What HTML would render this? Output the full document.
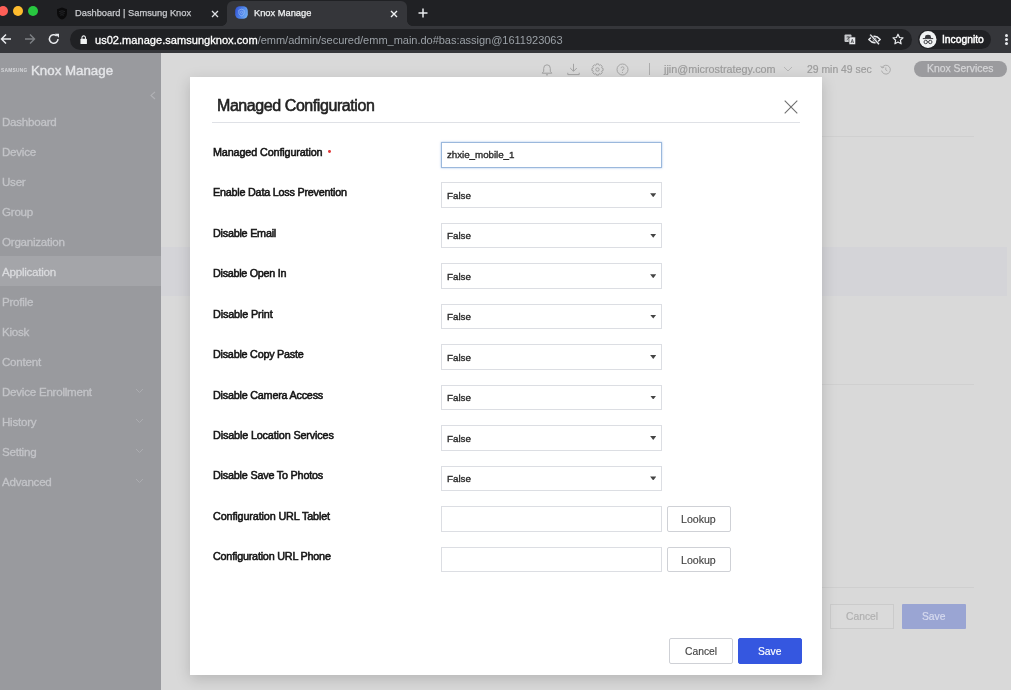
<!DOCTYPE html>
<html>
<head>
<meta charset="utf-8">
<title>Knox Manage</title>
<style>
*{box-sizing:border-box;margin:0;padding:0}
html,body{width:1011px;height:690px;overflow:hidden;background:#d9d9d9;font-family:"Liberation Sans",sans-serif;}
.abs{position:absolute}
.t{display:inline-block;will-change:transform}
.inp .t{position:relative;top:-0.700px}
.lbl,.nav,.hdr,.tabtxt,#url,#mtitle,.gl{will-change:transform}
#wrap{position:relative;width:1011px;height:690px;overflow:hidden;filter:blur(0.5px);}
/* browser chrome */
#titlebar{left:0;top:0;width:1011px;height:26px;background:#202124}
#toolbar{left:0;top:25.500px;width:1011px;height:27.500px;background:#35363a}
#tab{left:227px;top:1px;width:180px;height:25px;background:#35363a;border-radius:6px 6px 0 0}
#tab:before,#tab:after{content:"";position:absolute;bottom:0;width:5px;height:5px;background:radial-gradient(circle at 0 0,rgba(0,0,0,0) 4.500px,#35363a 5px)}
#tab:before{left:-5px}
#tab:after{right:-5px;background:radial-gradient(circle at 100% 0,rgba(0,0,0,0) 4.500px,#35363a 5px)}
.tl{width:9px;height:9px;border-radius:50%;top:6px}
.tabtxt{color:#e8eaed;font-size:9.300px;top:7.500px;white-space:nowrap;-webkit-text-stroke:0.250px currentColor}
#pill{left:70px;top:29px;width:842px;height:21px;border-radius:11px;background:#202124}
#url{left:95.300px;top:33.600px;font-size:11.050px;color:#9aa0a6;white-space:nowrap;letter-spacing:0.02px}
#url b{color:#fff;font-weight:normal;-webkit-text-stroke:0.3px #fff}
/* page */
#sidebar{left:0;top:53px;width:161px;height:637px;background:#999a9e}
#main{left:161px;top:53px;width:850px;height:637px;background:#d9d9d9}
.nav{left:2.400px;color:#c8c9cd;font-size:11.600px;white-space:nowrap;letter-spacing:-0.250px;-webkit-text-stroke:0.300px currentColor}
#navsel{left:0;top:256px;width:161px;height:30px;background:#a4a5a9}
.hdr{color:#9c9c9c;font-size:10.800px;white-space:nowrap;top:62.500px;-webkit-text-stroke:0.200px currentColor}
/* modal */
#modal{left:190px;top:77px;width:631.700px;height:597.700px;background:#fff;box-shadow:0 4px 14px rgba(0,0,0,0.17)}
#mtitle{left:217px;top:97px;font-size:16px;color:#222;white-space:nowrap;-webkit-text-stroke:0.550px #222;letter-spacing:-0.426px}
#mline{left:212px;top:122px;width:588px;height:1px;background:#dfe1e6}
.lbl{left:212.500px;font-size:10.8px;color:#141414;white-space:nowrap;-webkit-text-stroke:0.550px #141414}
.inp{left:440.600px;width:221.400px;height:25.500px;border:1px solid #dcdee3;background:#fff;font-size:9.800px;color:#2a2a2a;-webkit-text-stroke:0.350px currentColor;padding:0 0 0 5.400px;line-height:25px;white-space:nowrap}
.inp.focus{border:1px solid #9bb8dc;box-shadow:0 0 2px rgba(100,150,220,0.6)}
.arr{position:absolute;right:4.700px;top:9.900px;width:6.200px;height:3.900px;background:#444;clip-path:polygon(0 0,100% 0,50% 100%)}
.btn{height:25.500px;border:1px solid #cfd1d6;background:#fff;font-size:10.300px;color:#454545;text-align:center;line-height:25.400px;border-radius:2px;-webkit-text-stroke:0.150px currentColor}
</style>
</head>
<body>
<div id="wrap">
<!-- page background -->
<div id="main" class="abs"></div>
<div id="sidebar" class="abs"></div>

<!-- main bg details -->
<div class="abs" style="left:161px;top:247px;width:845.500px;height:49px;background:#d4d4d8"></div>
<div class="abs" style="left:822px;top:136px;width:152px;height:1px;background:#d0d0d0"></div>
<div class="abs" style="left:822px;top:384px;width:152px;height:1px;background:#d0d0d0"></div>
<div class="abs" style="left:822px;top:587px;width:152px;height:1px;background:#cfcfcf"></div>
<div class="abs" style="left:830px;top:603.500px;width:64px;height:25.500px;border:1px solid #cbcbcb;background:#dadada;color:#b0b0b0;font-size:10.300px;-webkit-text-stroke:0.200px #b0b0b0;text-align:center;line-height:24px"><span class="t">Cancel</span></div>
<div class="abs" style="left:902px;top:603.500px;width:64.200px;height:25.500px;background:#9aa5d3;color:#d6daee;font-size:10.300px;-webkit-text-stroke:0.200px #d6daee;text-align:center;line-height:26px;border-radius:1px"><span class="t">Save</span></div>

<!-- sidebar content -->
<div id="navsel" class="abs"></div>
<div class="abs gl" style="left:0.5px;top:67.600px;font-size:4.800px;color:#d6d7da;letter-spacing:0.280px;font-weight:bold;white-space:nowrap">SAMSUNG</div>
<div class="abs gl" style="left:30.500px;top:63.200px;font-size:13.300px;color:#e4e5e8;white-space:nowrap;-webkit-text-stroke:0.400px #e4e5e8">Knox Manage</div>
<svg class="abs" style="left:149px;top:90px" width="8" height="11" viewBox="0 0 8 11"><path d="M6 1.800 L2 5.400 L6 9" stroke="#b1b2b6" stroke-width="1.100" fill="none"/></svg>
<div class="abs nav" style="top:115px;color:#c3c4c8">Dashboard</div>
<div class="abs nav" style="top:145px;color:#c3c4c8">Device</div>
<div class="abs nav" style="top:175px;color:#c3c4c8">User</div>
<div class="abs nav" style="top:205px;color:#c3c4c8">Group</div>
<div class="abs nav" style="top:235px;color:#c3c4c8">Organization</div>
<div class="abs nav" style="top:265px;color:#dadbde">Application</div>
<div class="abs nav" style="top:295px;color:#c3c4c8">Profile</div>
<div class="abs nav" style="top:325px;color:#c3c4c8">Kiosk</div>
<div class="abs nav" style="top:355px;color:#c3c4c8">Content</div>
<div class="abs nav" style="top:385px;color:#c3c4c8">Device Enrollment</div>
<svg class="abs" style="left:135px;top:388px" width="9" height="6" viewBox="0 0 9 6"><path d="M1 1 L4.500 4.500 L8 1" stroke="#abacb0" stroke-width="1" fill="none"/></svg>
<div class="abs nav" style="top:415px;color:#c3c4c8">History</div>
<svg class="abs" style="left:135px;top:418px" width="9" height="6" viewBox="0 0 9 6"><path d="M1 1 L4.500 4.500 L8 1" stroke="#abacb0" stroke-width="1" fill="none"/></svg>
<div class="abs nav" style="top:445px;color:#c3c4c8">Setting</div>
<svg class="abs" style="left:135px;top:448px" width="9" height="6" viewBox="0 0 9 6"><path d="M1 1 L4.500 4.500 L8 1" stroke="#abacb0" stroke-width="1" fill="none"/></svg>
<div class="abs nav" style="top:475px;color:#c3c4c8">Advanced</div>
<svg class="abs" style="left:135px;top:478px" width="9" height="6" viewBox="0 0 9 6"><path d="M1 1 L4.500 4.500 L8 1" stroke="#abacb0" stroke-width="1" fill="none"/></svg>

<!-- header -->
<svg class="abs" style="left:540.500px;top:63px" width="12" height="13" viewBox="0 0 12 13"><path d="M2.700 8.300 V5.400 A3.300 3.600 0 0 1 9.300 5.400 V8.300 L10.800 10.200 H1.200 Z" fill="none" stroke="#a3a3a3" stroke-width="1" stroke-linejoin="round"/><path d="M5 11.600 Q6 12.400 7 11.600" stroke="#a3a3a3" stroke-width="1" fill="none"/></svg>
<svg class="abs" style="left:566.500px;top:63px" width="13" height="13" viewBox="0 0 13 13"><path d="M6.500 0.800 V8 M3.200 5 L6.500 8.300 L9.800 5 M0.800 9.800 V11.600 H12.200 V9.800" fill="none" stroke="#a3a3a3" stroke-width="1"/></svg>
<svg class="abs" style="left:591.100px;top:62.900px" width="13" height="13" viewBox="0 0 13 13"><path d="M5.37 0.91 L7.63 0.91 L7.77 1.97 L8.81 2.40 L9.65 1.75 L11.25 3.35 L10.60 4.19 L11.03 5.23 L12.09 5.37 L12.09 7.63 L11.03 7.77 L10.60 8.81 L11.25 9.65 L9.65 11.25 L8.81 10.60 L7.77 11.03 L7.63 12.09 L5.37 12.09 L5.23 11.03 L4.19 10.60 L3.35 11.25 L1.75 9.65 L2.40 8.81 L1.97 7.77 L0.91 7.63 L0.91 5.37 L1.97 5.23 L2.40 4.19 L1.75 3.35 L3.35 1.75 L4.19 2.40 L5.23 1.97 Z" fill="none" stroke="#a3a3a3" stroke-width="1" stroke-linejoin="round"/><circle cx="6.500" cy="6.500" r="1.700" fill="none" stroke="#a3a3a3" stroke-width="1"/></svg>
<svg class="abs" style="left:616.400px;top:62.800px" width="13" height="13" viewBox="0 0 13 13"><circle cx="6.500" cy="6.500" r="5.500" fill="none" stroke="#a6a6a6" stroke-width="1"/><path d="M5 5.200 A1.500 1.500 0 1 1 6.500 6.800 V7.800 M6.500 9 V10" fill="none" stroke="#a6a6a6" stroke-width="0.900"/></svg>
<div class="abs" style="left:648.500px;top:63.300px;width:1px;height:11.300px;background:#adadad"></div>
<div class="abs hdr" style="left:664px">jjin@microstrategy.com</div>
<svg class="abs" style="left:783px;top:66px" width="10" height="6" viewBox="0 0 10 6"><path d="M1 1 L5 5 L9 1" stroke="#b6b6b6" stroke-width="1" fill="none"/></svg>
<div class="abs hdr" style="left:807px;font-size:10.400px;top:63.700px">29 min 49 sec</div>
<svg class="abs" style="left:880px;top:63.500px" width="11.500" height="11.500" viewBox="0 0 13 13"><path d="M2.300 4 A5 5 0 1 1 1.800 7.500" fill="none" stroke="#a6a6a6" stroke-width="1"/><path d="M0.800 2.200 L2.300 4.500 L4.800 3.500" fill="none" stroke="#a6a6a6" stroke-width="1"/><path d="M6.500 4 V6.800 L8.300 7.800" fill="none" stroke="#a6a6a6" stroke-width="0.900"/></svg>
<div class="abs" style="left:914px;top:60.600px;width:93px;height:16.200px;border-radius:8.100px;background:#9b9b9e"></div>
<div class="abs gl" style="left:927px;top:62.500px;font-size:10.400px;color:#d4d4d6;white-space:nowrap;-webkit-text-stroke:0.250px #d4d4d6">Knox Services</div>

<!-- browser chrome -->
<div id="titlebar" class="abs"></div>
<div id="toolbar" class="abs"></div>
<div id="tab" class="abs"></div>
<div id="pill" class="abs"></div>

<!-- traffic lights -->
<div class="abs tl" style="left:-2px;background:#fe5f57;width:10px;height:10px"></div>
<div class="abs tl" style="left:13px;background:#febc2e;width:10px;height:10px"></div>
<div class="abs tl" style="left:28px;background:#28c840;width:10px;height:10px"></div>
<!-- tab 1 -->
<svg class="abs" style="left:56px;top:7px" width="12" height="13" viewBox="0 0 12 13"><path d="M6 0.5 L11 2.2 V6.5 C11 9.5 8.8 11.6 6 12.6 C3.2 11.6 1 9.5 1 6.5 V2.2 Z" fill="#0b0b0c"/><path d="M3 4.6 Q6 3 9 4.6 M3.5 6.4 Q6 5 8.5 6.4 M4.2 8.2 Q6 7.2 7.8 8.2" stroke="#2a2b2e" stroke-width="0.8" fill="none"/></svg>
<div class="abs tabtxt" style="left:75px;color:#c9cbcf">Dashboard | Samsung Knox</div>
<svg class="abs" style="left:211px;top:10px" width="8" height="8" viewBox="0 0 8 8"><path d="M1 1 L7 7 M7 1 L1 7" stroke="#dfe1e5" stroke-width="1.3"/></svg>
<!-- tab 2 active -->
<svg class="abs" style="left:234.800px;top:6.400px" width="13" height="13" viewBox="0 0 13 13"><defs><linearGradient id="fg" x1="0" y1="0.300" x2="1" y2="0.700"><stop offset="0" stop-color="#3557d6"/><stop offset="0.550" stop-color="#4f86ea"/><stop offset="1" stop-color="#74b0f4"/></linearGradient></defs><rect x="0.200" y="0.200" width="12.600" height="12.600" rx="4.600" fill="url(#fg)"/><path d="M6.500 3.200 L9.200 4.200 V6.600 C9.200 8.200 8 9.300 6.500 9.900 C5 9.300 3.800 8.200 3.800 6.600 V4.200 Z" fill="none" stroke="#a9c6f7" stroke-width="0.700" opacity="0.850"/><circle cx="6.500" cy="6.300" r="1.100" fill="none" stroke="#a9c6f7" stroke-width="0.600" opacity="0.800"/></svg>
<div class="abs tabtxt" style="left:254px;color:#f1f3f4">Knox Manage</div>
<svg class="abs" style="left:390px;top:10px" width="8" height="8" viewBox="0 0 8 8"><path d="M1 1 L7 7 M7 1 L1 7" stroke="#f1f3f4" stroke-width="1.4"/></svg>
<svg class="abs" style="left:418px;top:8px" width="10" height="10" viewBox="0 0 10 10"><path d="M5 0.5 V9.5 M0.5 5 H9.5" stroke="#e8eaed" stroke-width="1.5"/></svg>
<!-- nav buttons -->
<svg class="abs" style="left:0px;top:33px" width="12" height="12" viewBox="0 0 12 12"><path d="M11 6 H1.800 M6 1.500 L1.500 6 L6 10.500" stroke="#e8eaed" stroke-width="1.5" fill="none"/></svg>
<svg class="abs" style="left:24px;top:33px" width="12" height="12" viewBox="0 0 12 12"><path d="M1 6 H10.200 M6 1.500 L10.500 6 L6 10.500" stroke="#7d8084" stroke-width="1.4" fill="none"/></svg>
<svg class="abs" style="left:48px;top:33px" width="12" height="12" viewBox="0 0 12 12"><path d="M10 6 A4.300 4.300 0 1 1 8.700 2.900" stroke="#e8eaed" stroke-width="1.5" fill="none"/><path d="M7 0.800 H11 V4.800 Z" fill="#e8eaed"/></svg>
<!-- lock -->
<svg class="abs" style="left:80px;top:34.800px" width="7.400" height="9.600" viewBox="0 0 8 11"><rect x="0.300" y="4.300" width="7.400" height="6.200" rx="0.800" fill="#f1f3f4"/><path d="M2 4.500 V3 A2 2 0 0 1 6 3 V4.500" stroke="#f1f3f4" stroke-width="1.200" fill="none"/></svg>
<div id="url" class="abs"><b>us02.manage.samsungknox.com</b><span style="letter-spacing:-0.040px">/emm/admin/secured/emm_main.do#bas:assign@1611923063</span></div>
<!-- right icons -->
<svg class="abs" style="left:844px;top:34px" width="12" height="11" viewBox="0 0 12 11"><rect x="0.500" y="0.500" width="7" height="7.500" rx="1" fill="#c8cacd"/><rect x="5" y="3" width="6.500" height="7.500" rx="1" fill="#e8eaed" stroke="#35363a" stroke-width="0.600"/><path d="M2.500 3 H5.500 M4 2.300 V3 M2.800 5.800 Q4.600 5 5.200 3" stroke="#35363a" stroke-width="0.700" fill="none"/><path d="M7 9 L8.300 5.300 L9.600 9 M7.500 7.900 H9.100" stroke="#35363a" stroke-width="0.700" fill="none"/></svg>
<svg class="abs" style="left:868px;top:34px" width="13" height="11" viewBox="0 0 13 11"><path d="M0.800 5.500 Q6.500 -1 12.200 5.500 Q6.500 12 0.800 5.500 Z" fill="none" stroke="#e8eaed" stroke-width="1.300"/><circle cx="6.500" cy="5.500" r="1.900" fill="#e8eaed"/><path d="M1.800 0.500 L11.200 10.500" stroke="#35363a" stroke-width="2.600"/><path d="M2.300 0.600 L11 10.200" stroke="#e8eaed" stroke-width="1.300"/></svg>
<svg class="abs" style="left:892px;top:33px" width="12" height="12" viewBox="0 0 12 12"><path d="M6 1.200 L7.500 4.500 L11 4.900 L8.400 7.300 L9.100 10.800 L6 9 L2.900 10.800 L3.600 7.300 L1 4.900 L4.500 4.500 Z" fill="none" stroke="#e8eaed" stroke-width="1.200" stroke-linejoin="round"/></svg>
<!-- incognito -->
<div class="abs" style="left:918px;top:30px;width:73px;height:19px;border-radius:10px;background:#202124"></div>
<svg class="abs" style="left:919px;top:31px" width="18" height="18" viewBox="0 0 18 18"><circle cx="9" cy="8.500" r="8.500" fill="#f1f3f4"/><path d="M5.800 7 L6.600 4.200 Q9 3.400 11.400 4.200 L12.200 7 Z" fill="#35363a"/><path d="M3.800 7.600 H14.200" stroke="#35363a" stroke-width="1"/><circle cx="6.700" cy="11" r="1.700" fill="none" stroke="#35363a" stroke-width="0.900"/><circle cx="11.300" cy="11" r="1.700" fill="none" stroke="#35363a" stroke-width="0.900"/><path d="M8.300 10.800 H9.700" stroke="#35363a" stroke-width="0.800"/></svg>
<div class="abs gl" style="left:942px;top:34px;font-size:10.300px;color:#fff;-webkit-text-stroke:0.450px #fff;white-space:nowrap">Incognito</div>
<div class="abs" style="left:1004.500px;top:34px;width:3px;height:3px;border-radius:50%;background:#e8eaed;box-shadow:0 4px 0 #e8eaed,0 8px 0 #e8eaed"></div>

<!-- modal -->
<div id="modal" class="abs"></div>

<div id="mtitle" class="abs">Managed Configuration</div>
<div id="mline" class="abs"></div>
<svg class="abs" style="left:783.500px;top:100px" width="14" height="14" viewBox="0 0 14 14"><path d="M0.700 0.700 L13.300 13.300 M13.300 0.700 L0.700 13.300" stroke="#6f6f6f" stroke-width="1.100"/></svg>
<div class="abs" style="left:328px;top:150.300px;width:2.800px;height:2.800px;border-radius:50%;background:#e23b3b"></div>
<div class="abs lbl" style="top:146.0px;letter-spacing:-0.131px">Managed Configuration</div>
<div class="abs inp focus" style="top:142.0px;letter-spacing:-0.050px"><span class="t">zhxie_mobile_1</span></div>
<div class="abs lbl" style="top:186.4px;letter-spacing:-0.224px">Enable Data Loss Prevention</div>
<div class="abs inp" style="top:182.4px"><span class="t">False</span><span class="arr"></span></div>
<div class="abs lbl" style="top:226.8px;letter-spacing:-0.232px">Disable Email</div>
<div class="abs inp" style="top:222.9px"><span class="t">False</span><span class="arr"></span></div>
<div class="abs lbl" style="top:267.2px;letter-spacing:-0.282px">Disable Open In</div>
<div class="abs inp" style="top:263.4px"><span class="t">False</span><span class="arr"></span></div>
<div class="abs lbl" style="top:307.6px;letter-spacing:-0.125px">Disable Print</div>
<div class="abs inp" style="top:303.8px"><span class="t">False</span><span class="arr"></span></div>
<div class="abs lbl" style="top:348.0px;letter-spacing:-0.240px">Disable Copy Paste</div>
<div class="abs inp" style="top:344.2px"><span class="t">False</span><span class="arr"></span></div>
<div class="abs lbl" style="top:388.5px;letter-spacing:-0.220px">Disable Camera Access</div>
<div class="abs inp" style="top:384.7px"><span class="t">False</span><span class="arr"></span></div>
<div class="abs lbl" style="top:428.9px;letter-spacing:-0.141px">Disable Location Services</div>
<div class="abs inp" style="top:425.2px"><span class="t">False</span><span class="arr"></span></div>
<div class="abs lbl" style="top:469.3px;letter-spacing:-0.202px">Disable Save To Photos</div>
<div class="abs inp" style="top:465.6px"><span class="t">False</span><span class="arr"></span></div>
<div class="abs lbl" style="top:509.7px;letter-spacing:-0.127px">Configuration URL Tablet</div>
<div class="abs inp" style="top:506.1px"></div>
<div class="abs btn" style="left:666.500px;top:506.1px;width:64.500px;font-size:10.600px"><span class="t">Lookup</span></div>
<div class="abs lbl" style="top:550.1px;letter-spacing:-0.215px">Configuration URL Phone</div>
<div class="abs inp" style="top:546.5px"></div>
<div class="abs btn" style="left:666.500px;top:546.5px;width:64.500px;font-size:10.600px"><span class="t">Lookup</span></div>
<div class="abs btn" style="left:668.500px;top:638px;width:64.500px"><span class="t">Cancel</span></div>
<div class="abs btn" style="left:737.500px;top:638px;width:64.500px;background:#3557e0;border-color:#3557e0;color:#fff"><span class="t">Save</span></div>
</div>
</body>
</html>
